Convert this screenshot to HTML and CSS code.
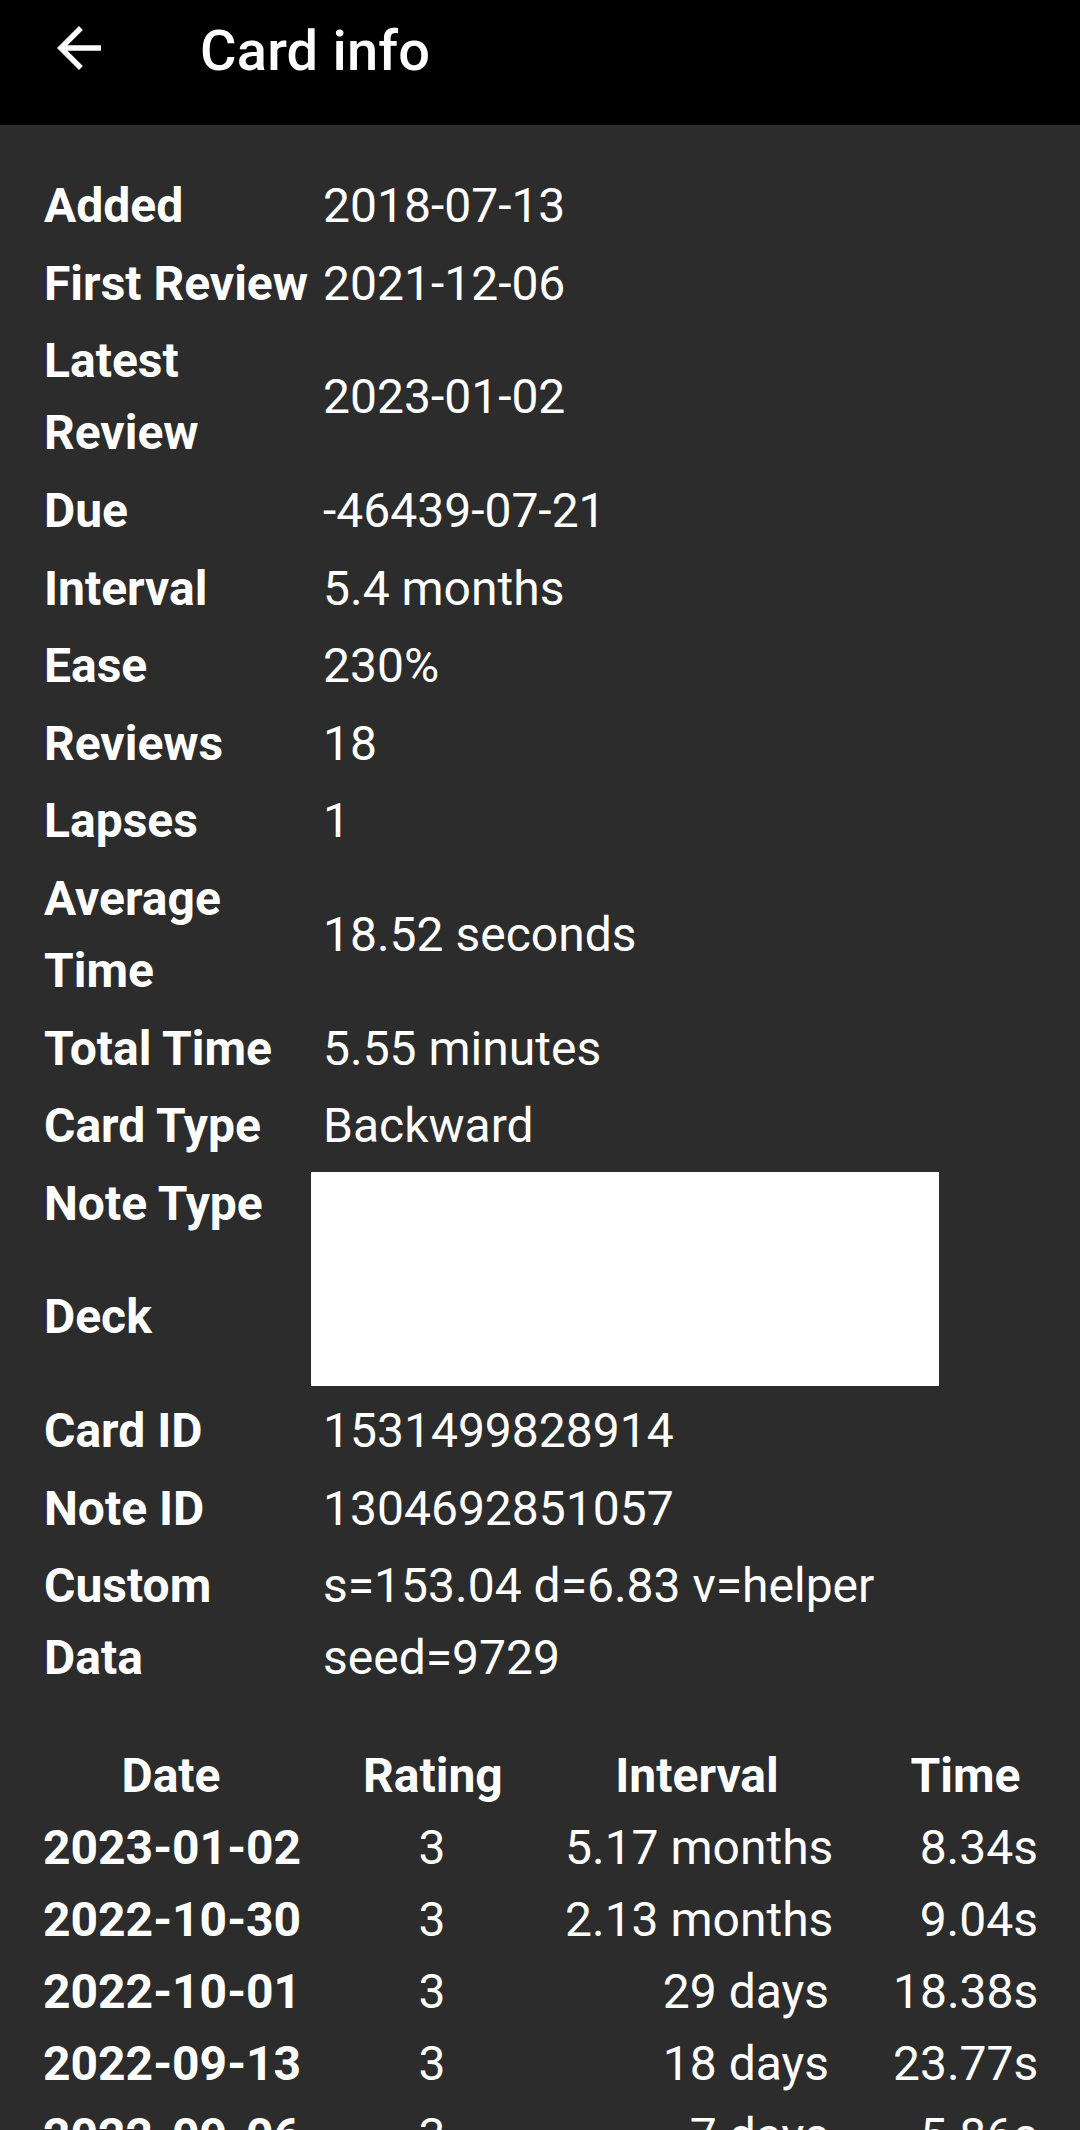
FILE: index.html
```html
<!DOCTYPE html>
<html lang="en">
<head>
<meta charset="utf-8">
<title>Card info</title>
<link rel="stylesheet" href="styles.css">
</head>
<body>
<header class="toolbar">
  <span class="back" aria-label="Back">
    <svg viewBox="0 0 24 24" width="66" height="66"><path fill="#fff" d="M20 11H7.83l5.59-5.59L12 4l-8 8 8 8 1.41-1.41L7.83 13H20v-2z"/></svg>
  </span>
  <h1 class="title">Card info</h1>
</header>
<main class="content">
  <div class="info">
    <div class="lbl">Added</div><div class="val">2018-07-13</div>
    <div class="lbl">First Review</div><div class="val">2021-12-06</div>
    <div class="lbl">Latest Review</div><div class="val">2023-01-02</div>
    <div class="lbl">Due</div><div class="val">-46439-07-21</div>
    <div class="lbl">Interval</div><div class="val">5.4 months</div>
    <div class="lbl">Ease</div><div class="val">230%</div>
    <div class="lbl">Reviews</div><div class="val">18</div>
    <div class="lbl">Lapses</div><div class="val">1</div>
    <div class="lbl">Average Time</div><div class="val">18.52 seconds</div>
    <div class="lbl">Total Time</div><div class="val">5.55 minutes</div>
    <div class="lbl">Card Type</div><div class="val">Backward</div>
    <div class="lbl">Note Type</div><div class="val redacted-cell"><div class="redacted"></div></div>
    <div class="lbl tall">Deck</div>
    <div class="lbl">Card ID</div><div class="val">1531499828914</div>
    <div class="lbl">Note ID</div><div class="val">1304692851057</div>
    <div class="lbl">Custom Data</div><div class="val">s=153.04 d=6.83 v=helper seed=9729</div>
  </div>

  <div class="revlog">
    <div class="th">Date</div><div class="th">Rating</div><div class="th">Interval</div><div class="th">Time</div>

    <div class="td date">2023-01-02</div><div class="td rating">3</div><div class="td num">5.17 months</div><div class="td num">8.34s</div>
    <div class="td date">2022-10-30</div><div class="td rating">3</div><div class="td num">2.13 months</div><div class="td num">9.04s</div>
    <div class="td date">2022-10-01</div><div class="td rating">3</div><div class="td num">29 days</div><div class="td num">18.38s</div>
    <div class="td date">2022-09-13</div><div class="td rating">3</div><div class="td num">18 days</div><div class="td num">23.77s</div>
    <div class="td date">2022-09-06</div><div class="td rating">3</div><div class="td num">7 days</div><div class="td num">5.86s</div>
  </div>
</main>
</body>
</html>
```

FILE: styles.css
```css
html, body {
  margin: 0;
  padding: 0;
  background: #2c2c2c;
  color: #fff;
  font-family: Roboto, "Noto Sans", "Liberation Sans", sans-serif;
}

body {
  width: 1080px;
  height: 2130px;
  overflow: hidden;
}

.toolbar {
  height: 125px;
  background: #000;
  display: flex;
  align-items: flex-start;
  box-sizing: border-box;
  padding: 15px 0 0 46px;
}

.back {
  display: block;
  width: 66px;
  height: 66px;
}

.back svg {
  display: block;
}

.title {
  margin: 3px 0 0 88px;
  font-size: 56px;
  font-weight: 500;
  line-height: 66px;
  letter-spacing: 0.2px;
}

.content {
  padding: 42.5px 0 0 0;
}

.info {
  display: grid;
  grid-template-columns: 268px 1fr;
  column-gap: 11px;
  padding: 0 40px 0 44px;
  font-size: 48px;
  line-height: 72px;
}

.lbl, .val {
  padding: 2.8px 0;
  align-self: center;
}

.lbl {
  font-weight: 700;
}

.lbl.tall {
  grid-column: 1;
  height: 144px;
  display: flex;
  align-items: center;
}

.redacted-cell {
  grid-row: span 2;
  padding: 0;
}

.redacted {
  width: 628px;
  height: 214px;
  margin-left: -12px;
  background: #fff;
}

.revlog {
  display: grid;
  grid-template-columns: 256px 138px 264px 145px;
  column-gap: 64px;
  margin: 43.2px 0 0 43px;
  font-size: 48px;
  line-height: 72px;
  white-space: nowrap;
}

.th {
  font-weight: 700;
  text-align: center;
}

.td.date {
  font-weight: 700;
  text-align: center;
}

.td.rating {
  text-align: center;
}

.td.num {
  text-align: right;
}
```
